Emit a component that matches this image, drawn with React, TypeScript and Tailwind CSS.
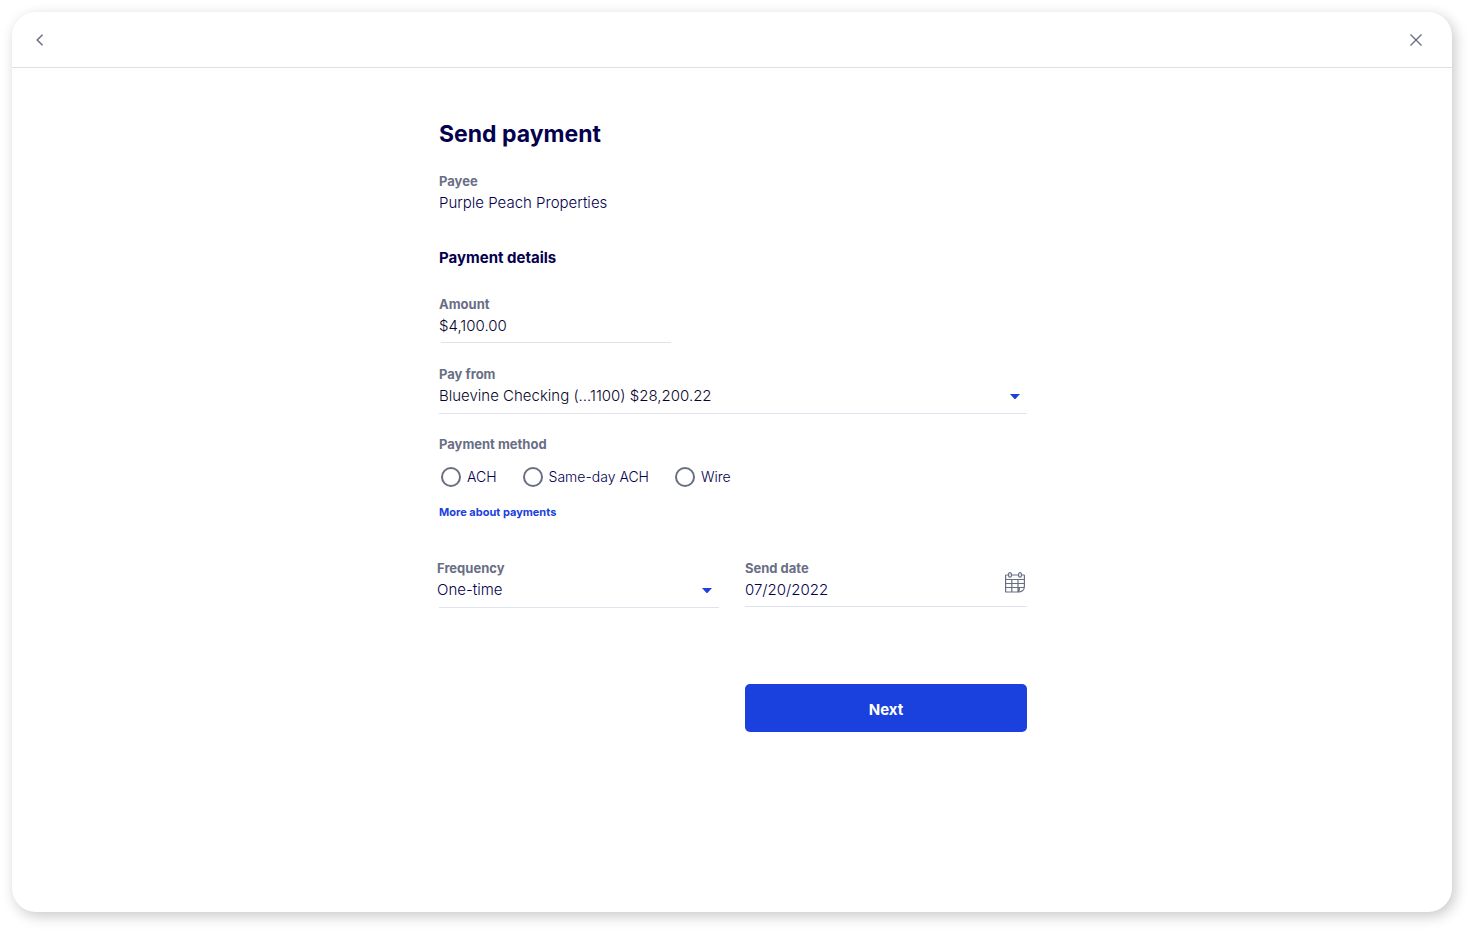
import React, { useState } from 'react'

interface FieldProps {
  id: string
  label: string
  children: React.ReactNode
  lineClasses?: string
}

interface SelectBoxProps {
  id: string
  options: string[]
  textClasses?: string
}

const methods = ['ACH', 'Same-day ACH', 'Wire']

const labelClasses = 'block text-[13px] leading-5 font-bold text-[#696e85]'
const inputClasses = 'block w-full h-6 p-0 border-0 bg-transparent text-[15px] leading-6 font-light outline-none'

const Field: React.FC<FieldProps> = ({ id, label, children, lineClasses = 'mt-[5px]' }) => (
  <div>
    <label htmlFor={id} className={labelClasses}>{label}</label>
    {children}
    <div className={`h-px bg-[#dfe3ee] ${lineClasses}`} />
  </div>
)

const SelectBox: React.FC<SelectBoxProps> = ({ id, options, textClasses = 'text-[#04004d]' }) => (
  <div className="relative">
    <select id={id} className={`${inputClasses} ${textClasses} appearance-none pr-6`}>
      {options.map((o) => (
        <option key={o}>{o}</option>
      ))}
    </select>
    <svg
      className="absolute right-[7px] top-[10px] pointer-events-none"
      width="10"
      height="5"
      viewBox="0 0 10 5"
      fill="#1a41de"
      aria-hidden="true"
    >
      <path d="M0 0h10L5.7 4.7a1 1 0 0 1-1.4 0z" />
    </svg>
  </div>
)

const CalendarIcon = () => (
  <svg width="20" height="21" viewBox="0 0 20 21" fill="none" stroke="#696e85" strokeWidth="1.2" aria-hidden="true">
    <path d="M3.5 3H1.2a.6.6 0 0 0-.6.6v15.8a.6.6 0 0 0 .6.6h12.3c3.3 0 5.9-2.2 5.9-5.4V3.6a.6.6 0 0 0-.6-.6h-2.3M6.5 3h7" />
    <path d="M.6 7.5h18.8M.6 11.5h18.8M.6 15.5h18.4M6.8 7.5V20M13 7.5V20M13.5 20c.9-1.2 1-2.8.8-4.5" />
    <rect x="3.6" y=".7" width="2.8" height="4.4" rx="1.4" />
    <rect x="13.6" y=".7" width="2.8" height="4.4" rx="1.4" />
  </svg>
)

const App: React.FC = () => {
  const [amount, setAmount] = useState('$4,100.00')
  const [date, setDate] = useState('07/20/2022')
  const [method, setMethod] = useState('')

  return (
    <div className="min-h-screen flex bg-white pt-3 pl-3 pr-5 pb-5 font-['Inter',sans-serif] text-[#04004d]">
      <div className="flex-1 flex flex-col rounded-[24px] bg-white shadow-[3px_4px_14px_rgba(0,0,0,0.22)]">
        {/* Top bar */}
        <header className="h-14 flex items-center justify-between pl-6 pr-[30px] border-b border-[#dfe1ea]">
          <button type="button" aria-label="Back" className="cursor-pointer">
            <svg width="8" height="12" viewBox="0 0 8 12" fill="none" stroke="#696e85" strokeWidth="1.5" aria-hidden="true">
              <path d="M6.5.7 1.2 6l5.3 5.3" />
            </svg>
          </button>
          <button type="button" aria-label="Close" className="cursor-pointer">
            <svg width="12" height="12" viewBox="0 0 12 12" fill="none" stroke="#696e85" strokeWidth="1.4" aria-hidden="true">
              <path d="m.5.5 11 11M11.5.5l-11 11" />
            </svg>
          </button>
        </header>

        <form className="w-full max-w-[590px] mx-auto pt-12 pb-12" onSubmit={(e) => e.preventDefault()}>
          <div className="pl-0.5">
            <h1 className="text-[23px] leading-9 font-bold">Send payment</h1>

            <div className="mt-[19px]">
              <div className={labelClasses}>Payee</div>
              <div className="text-[15px] leading-6 font-light">Purple Peach Properties</div>
            </div>

            <h2 className="mt-[31px] text-[15px] leading-6 font-bold">Payment details</h2>

            <div className="mt-6 w-58">
              <Field id="amount" label="Amount" lineClasses="mt-1 ml-0.5">
                <input
                  id="amount"
                  type="text"
                  className={`${inputClasses} text-[#08062b]`}
                  value={amount}
                  onChange={(e) => setAmount(e.target.value)}
                />
              </Field>
            </div>

            <div className="mt-[21px]">
              <Field id="pay-from" label="Pay from">
                <SelectBox id="pay-from" options={['Bluevine Checking (...1100) $28,200.22']} textClasses="text-[#08062b]" />
              </Field>
            </div>

            {/* Payment method */}
            <fieldset className="mt-5">
              <legend className={labelClasses}>Payment method</legend>
              <div className="mt-[13px] pl-0.5 flex flex-wrap gap-[26px]">
                {methods.map((m) => (
                  <label key={m} className="flex items-center gap-1.5 text-sm leading-5 font-light">
                    <input
                      type="radio"
                      name="method"
                      value={m}
                      checked={method === m}
                      onChange={() => setMethod(m)}
                      className="appearance-none size-5 rounded-full border-2 border-[#696e85] checked:border-[6px] checked:border-[#1a41de]"
                    />
                    {m}
                  </label>
                ))}
              </div>
            </fieldset>
            <a href="#payments" className="mt-[15px] block w-fit text-[11px] leading-5 font-bold text-[#1a41de]">More about payments</a>
          </div>

          <div className="mt-9 grid grid-cols-2 gap-[26px]">
            <Field id="frequency" label="Frequency" lineClasses="mt-[5px] ml-0.5">
              <SelectBox id="frequency" options={['One-time']} />
            </Field>
            <div className="relative">
              <Field id="send-date" label="Send date" lineClasses="mt-1">
                <input
                  id="send-date"
                  type="text"
                  className={`${inputClasses} pr-8`}
                  value={date}
                  onChange={(e) => setDate(e.target.value)}
                />
              </Field>
              <button type="button" aria-label="Choose date" className="absolute right-0.5 top-[14px] cursor-pointer">
                <CalendarIcon />
              </button>
            </div>
          </div>

          <div className="mt-[76px] grid grid-cols-2 gap-[26px]">
            <button type="submit" className="col-start-2 h-12 rounded-[5px] bg-[#1a41de] pt-1 text-[15px] leading-6 font-bold text-white cursor-pointer">
              Next
            </button>
          </div>
        </form>
      </div>
    </div>
  )
}

export default App
